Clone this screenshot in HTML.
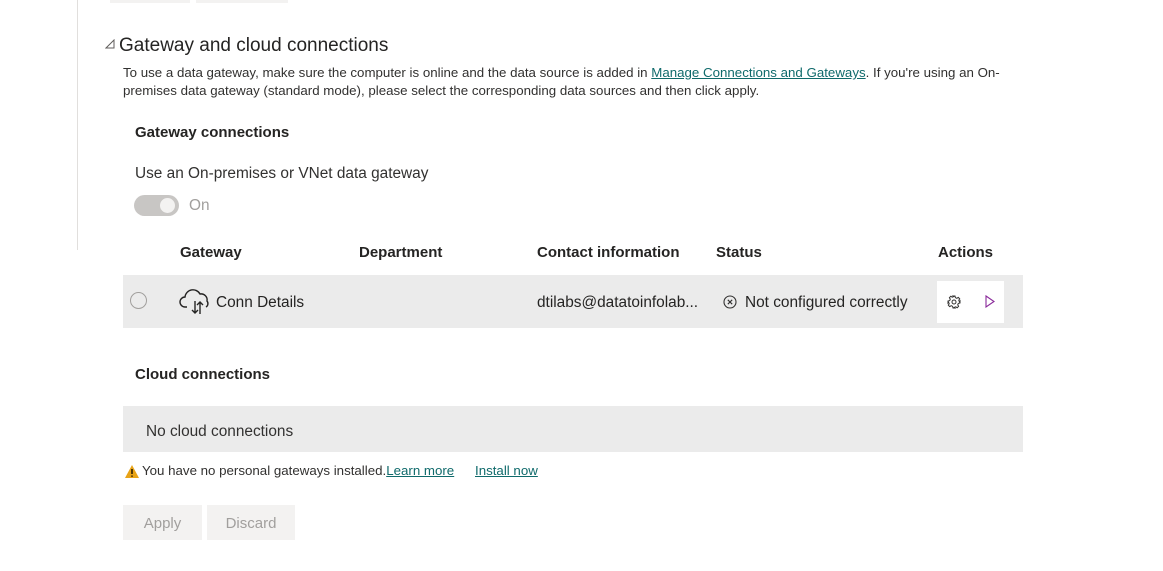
<!DOCTYPE html>
<html><head><style>
body{margin:0;width:1163px;height:571px;background:#fff;position:relative;overflow:hidden;font-family:"Segoe UI","Liberation Sans",sans-serif;color:#252423}
.a{position:absolute;white-space:nowrap}
a{color:#0f6a6b;text-decoration:underline}
.m{font-size:15.4px}
.b{font-size:15px;font-weight:bold}
</style></head><body>
<div class="a" style="left:77px;top:0;width:1px;height:250px;background:#e1dfdd"></div>
<div class="a" style="left:110px;top:0;width:80px;height:3px;background:#f3f2f1"></div>
<div class="a" style="left:196px;top:0;width:92px;height:3px;background:#f3f2f1"></div>
<svg class="a" style="left:105px;top:39px" width="10" height="10" viewBox="0 0 10 10"><path d="M9 1V9H1z" fill="none" stroke="#605e5c" stroke-width="1"/></svg>
<div class="a" style="left:119px;top:35px;font-size:19px;color:#252423">Gateway and cloud connections</div>
<div class="a" style="left:123px;top:64px;font-size:13.3px;line-height:18px;color:#323130">To use a data gateway, make sure the computer is online and the data source is added in <a>Manage Connections and Gateways</a>. If you're using an On-<br>premises data gateway (standard mode), please select the corresponding data sources and then click apply.</div>
<div class="a b" style="left:135px;top:124px">Gateway connections</div>
<div class="a m" style="left:135px;top:165px;color:#323130">Use an On-premises or VNet data gateway</div>
<div class="a" style="left:134px;top:195px;width:45px;height:21px;border-radius:11px;background:#c8c6c4"></div>
<div class="a" style="left:160px;top:198px;width:15px;height:15px;border-radius:50%;background:#f3f2f1"></div>
<div class="a m" style="left:189px;top:197px;color:#a19f9d">On</div>
<div class="a b" style="top:244px;left:180px">Gateway</div>
<div class="a b" style="top:244px;left:359px">Department</div>
<div class="a b" style="top:244px;left:537px">Contact information</div>
<div class="a b" style="top:244px;left:716px">Status</div>
<div class="a b" style="top:244px;left:938px">Actions</div>
<div class="a" style="left:123px;top:275px;width:900px;height:53px;background:#ebebeb"></div>
<div class="a" style="left:130px;top:292px;width:17px;height:17px;border:1.5px solid #a19f9d;border-radius:50%;box-sizing:border-box"></div>
<svg class="a" style="left:179px;top:287px" width="32" height="28" viewBox="0 0 32 28" fill="none" stroke="#252423" stroke-width="1.4"><path d="M8 20H6a5 5 0 0 1 0-10 8 8 0 0 1 15-3 6 6 0 0 1 7 7 4 4 0 0 1-1 6"/><path d="M16 14v12M13 23l3 3 3-3M21 27V15M18 18l3-3 3 3"/></svg>
<div class="a m" style="left:216px;top:294px">Conn Details</div>
<div class="a m" style="left:537px;top:294px">dtilabs@datatoinfolab...</div>
<svg class="a" style="left:723px;top:295px" width="14" height="14" viewBox="0 0 14 14" fill="none" stroke="#323130" stroke-width="1.1"><circle cx="7" cy="7" r="6"/><path d="M4.8 4.8l4.4 4.4M9.2 4.8l-4.4 4.4"/></svg>
<div class="a m" style="left:745px;top:294px">Not configured correctly</div>
<div class="a" style="left:937px;top:281px;width:67px;height:42px;background:#fff"></div>
<svg class="a" style="left:947px;top:295px" width="14" height="14" viewBox="0 0 14 14" fill="none" stroke="#323130" stroke-width="1"><circle cx="7" cy="7" r="2"/><path d="M6 1h2l.4 1.7 1.4.6 1.5-.9 1.4 1.4-.9 1.5.6 1.4L13 6v2l-1.7.4-.6 1.4.9 1.5-1.4 1.4-1.5-.9-1.4.6L8 13H6l-.4-1.7-1.4-.6-1.5.9-1.4-1.4.9-1.5-.6-1.4L1 8V6l1.7-.4.6-1.4-.9-1.5 1.4-1.4 1.5.9 1.4-.6z"/></svg>
<svg class="a" style="left:985px;top:295px" width="10" height="13" viewBox="0 0 10 13" fill="none" stroke="#8a2a9a" stroke-width="1.1"><path d="M1 1l8 5.5L1 12z"/></svg>
<div class="a b" style="left:135px;top:366px">Cloud connections</div>
<div class="a" style="left:123px;top:406px;width:900px;height:46px;background:#ebebeb"></div>
<div class="a m" style="left:146px;top:423px;color:#323130">No cloud connections</div>
<svg class="a" style="left:125px;top:465px" width="14" height="13" viewBox="0 0 14 13"><path d="M7 0L14 13H0z" fill="#e8a317"/><path d="M7 4v5M7 10.5v1.2" stroke="#000" stroke-width="1.3"/></svg>
<div class="a" style="left:142px;top:463px;font-size:13.3px;color:#323130">You have no personal gateways installed.<a>Learn more</a></div>
<div class="a" style="left:475px;top:463px;font-size:13.3px"><a>Install now</a></div>
<div class="a" style="left:123px;top:505px;width:79px;height:35px;background:#f3f2f1;color:#a19f9d;font-size:15px;text-align:center;line-height:37px">Apply</div>
<div class="a" style="left:207px;top:505px;width:88px;height:35px;background:#f3f2f1;color:#a19f9d;font-size:15px;text-align:center;line-height:37px">Discard</div>
</body></html>
